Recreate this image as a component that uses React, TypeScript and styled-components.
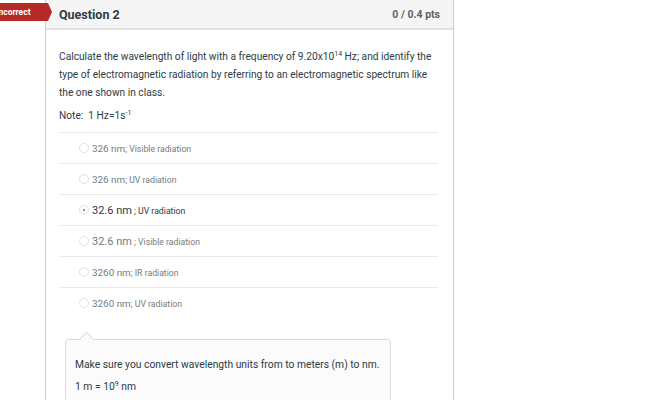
import styled, { createGlobalStyle } from "styled-components"

const Global = createGlobalStyle`
  html, body {
    margin: 0;
    padding: 0;
    background: #ffffff;
    font-family: Roboto, "Liberation Sans", sans-serif;
    overflow: hidden;
  }
`

type Answer = {
  value: string
  kind: string
  big?: boolean
  selected?: boolean
}

const answers: Answer[] = [
  { value: "326 nm", kind: "; Visible radiation" },
  { value: "326 nm", kind: "; UV radiation" },
  { value: "32.6 nm", kind: " ; UV radiation", big: true, selected: true },
  { value: "32.6 nm", kind: " ; Visible radiation", big: true },
  { value: "3260 nm", kind: "; IR radiation" },
  { value: "3260 nm", kind: "; UV radiation" },
]

const App = () => {
  return (
    <Page>
      <Global />
      <Tag>Incorrect</Tag>
      <Card>
        <Header>
          <Title>Question 2</Title>
          <Points>0 / 0.4 pts</Points>
        </Header>
        <Body>
          <Prompt>
            Calculate the wavelength of light with a frequency of 9.20x10<sup>14</sup> Hz; and identify the
            type of electromagnetic radiation by referring to an electromagnetic spectrum like
            the one shown in class.
          </Prompt>
          <Note>
            Note:&nbsp; 1 Hz=1s<sup>-1</sup>
          </Note>
          <List>
            {answers.map((a, i) => (
              <Row key={i}>
                <Radio checked={a.selected} />
                <Label selected={a.selected}>
                  <Value big={a.big}>{a.value}</Value>
                  <Kind>{a.kind}</Kind>
                </Label>
              </Row>
            ))}
          </List>
          <Feedback>
            <p>Make sure you convert wavelength units from to meters (m) to nm.</p>
            <p>
              1 m = 10<sup>9</sup> nm
            </p>
          </Feedback>
        </Body>
      </Card>
    </Page>
  )
}

export default App

const Page = styled.div`
  position: relative;
  width: 650px;
  height: 400px;
`
const Tag = styled.div`
  position: absolute;
  left: -4px;
  top: 3px;
  height: 18px;
  width: 52px;
  background: #b52a27;
  color: #fff;
  font-size: 8.5px;
  font-weight: 700;
  line-height: 18px;
  z-index: 2;
  white-space: nowrap;

  &::after {
    content: "";
    position: absolute;
    right: -4px;
    top: 0;
    border-top: 9px solid transparent;
    border-bottom: 9px solid transparent;
    border-left: 4px solid #b52a27;
  }
`
const Card = styled.div`
  margin-left: 45px;
  width: 407px;
  height: 400px;
  border-left: 1px solid #c7cdd1;
  border-right: 1px solid #c7cdd1;
`
const Header = styled.div`
  height: 28px;
  background: #f5f5f5;
  border-bottom: 2px solid #e2e2e2;
  display: flex;
  align-items: center;
  justify-content: space-between;
  padding: 0 13px 0 13px;
`
const Title = styled.div`
  font-size: 12.5px;
  font-weight: 700;
  color: #2d3b45;
`
const Points = styled.div`
  font-size: 10.5px;
  font-weight: 700;
  color: #5f6366;
`
const Body = styled.div`
  padding: 18px 15px 0 13px;
  color: #2d3b45;
  sup {
    font-size: 7px;
    line-height: 0;
  }
`
const Prompt = styled.div`
  font-size: 10.2px;
  line-height: 18px;
`
const Note = styled.div`
  font-size: 10.2px;
  line-height: 18px;
  margin-top: 5px;
`
const List = styled.div`
  margin-top: 7px;
`
const Row = styled.div`
  height: 30px;
  border-top: 1px solid #e8eaec;
  display: flex;
  align-items: center;
  padding-left: 20px;
`
const Radio = styled.span<{ checked?: boolean }>`
  width: 8px;
  height: 8px;
  border-radius: 50%;
  border: 1px solid #dfe2e4;
  margin-right: 3px;
  display: flex;
  align-items: center;
  justify-content: center;

  &::after {
    content: "";
    width: 2px;
    height: 2px;
    border-radius: 50%;
    background: ${(p) => (p.checked ? "#6b6f72" : "transparent")};
  }
`
const Label = styled.span<{ selected?: boolean }>`
  color: ${(p) => (p.selected ? "#2d3b45" : "#777b7e")};
  display: flex;
  align-items: baseline;
  white-space: pre;
`
const Value = styled.span<{ big?: boolean }>`
  font-size: ${(p) => (p.big ? "11px" : "9.9px")};
`
const Kind = styled.span`
  font-size: 8.7px;
`
const Feedback = styled.div`
  position: relative;
  margin: 21px 0 0 6px;
  width: 326px;
  height: 80px;
  background: #fbfbfb;
  border: 1px solid #d9dde0;
  border-radius: 3px;
  padding: 10px 10px 0 9px;
  box-sizing: border-box;
  font-size: 10.3px;
  color: #2d3b45;

  p {
    margin: 8px 0 0;
    line-height: 14px;
  }

  &::before {
    content: "";
    position: absolute;
    left: 15px;
    top: -6px;
    width: 10px;
    height: 10px;
    background: #fbfbfb;
    border-left: 1px solid #d9dde0;
    border-top: 1px solid #d9dde0;
    transform: rotate(45deg);
  }
`
